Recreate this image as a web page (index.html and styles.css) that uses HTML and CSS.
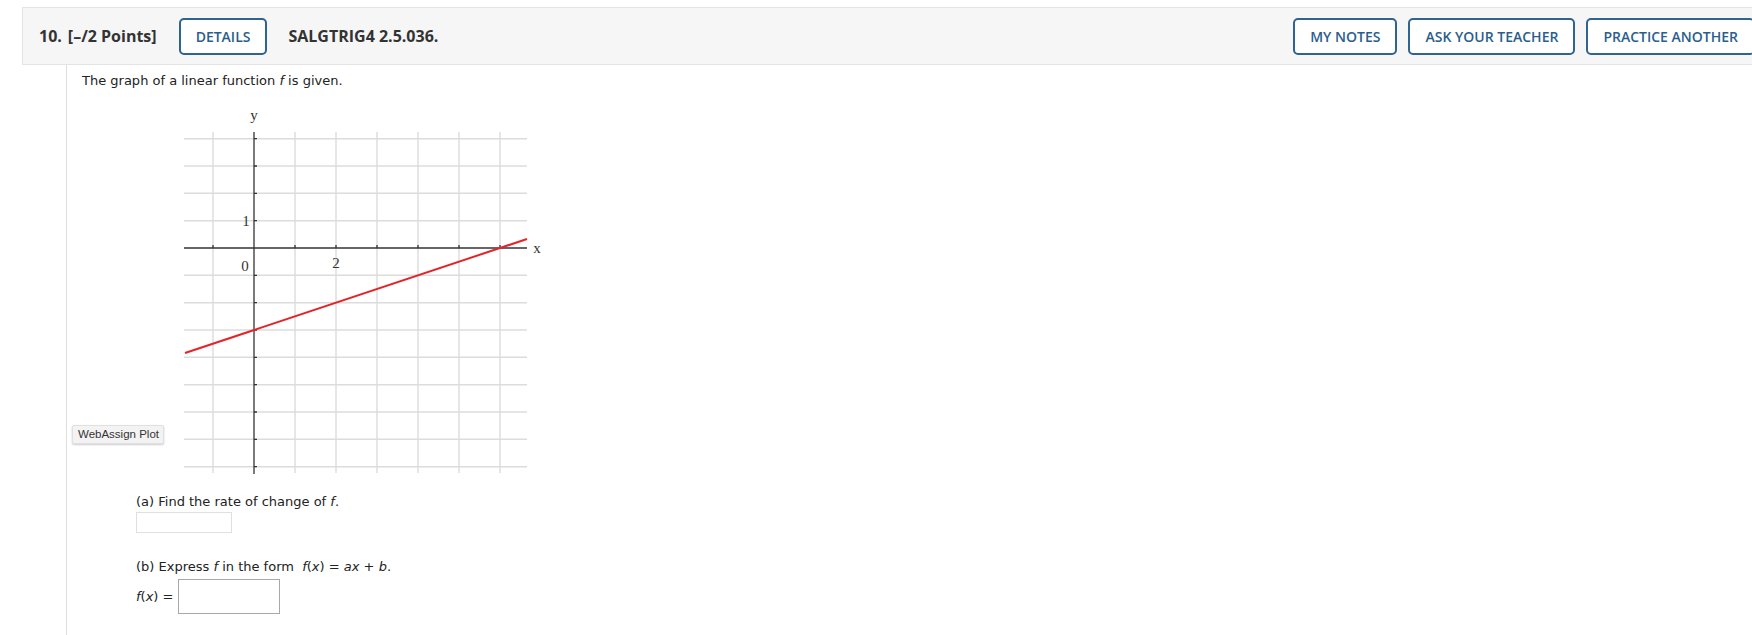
FILE: index.html
```html
<!DOCTYPE html>
<html lang="en">
	<head>
		<meta charset="utf-8">
		<title>SALGTRIG4 2.5.036</title>
		<link rel="stylesheet" href="styles.css">
	</head>
	<body>
		<div class="qhead">
			<span class="qnum">10.</span>
			<span class="qpts">[&ndash;/2 Points]</span>
			<button class="qbtn details">DETAILS</button>
			<span class="qname">SALGTRIG4 2.5.036.</span>
			<div class="qtools">
				<button class="qbtn">MY NOTES</button>
				<button class="qbtn">ASK YOUR TEACHER</button>
				<button class="qbtn">PRACTICE ANOTHER</button>
			</div>
		</div>
		<div class="qbody">
			<p class="prompt">The graph of a linear function <i>f</i> is given.</p>
			<div class="figure">
				<span class="badge">WebAssign Plot</span>
				<svg class="plot" width="370" height="382" viewBox="0 0 370 382">
					<g stroke="#dcdcdc" stroke-width="1.4">
						<!-- horizontal grid -->
						<line x1="5" y1="40.7" x2="348" y2="40.7"/>
						<line x1="5" y1="68" x2="348" y2="68"/>
						<line x1="5" y1="95.3" x2="348" y2="95.3"/>
						<line x1="5" y1="122.7" x2="348" y2="122.7"/>
						<line x1="5" y1="177.3" x2="348" y2="177.3"/>
						<line x1="5" y1="204.7" x2="348" y2="204.7"/>
						<line x1="5" y1="232" x2="348" y2="232"/>
						<line x1="5" y1="259.3" x2="348" y2="259.3"/>
						<line x1="5" y1="286.7" x2="348" y2="286.7"/>
						<line x1="5" y1="314" x2="348" y2="314"/>
						<line x1="5" y1="341.3" x2="348" y2="341.3"/>
						<line x1="5" y1="368.7" x2="348" y2="368.7"/>
						<!-- vertical grid -->
						<line x1="34" y1="34" x2="34" y2="375"/>
						<line x1="116" y1="34" x2="116" y2="375"/>
						<line x1="157" y1="34" x2="157" y2="375"/>
						<line x1="198" y1="34" x2="198" y2="375"/>
						<line x1="239" y1="34" x2="239" y2="375"/>
						<line x1="280" y1="34" x2="280" y2="375"/>
						<line x1="321" y1="34" x2="321" y2="375"/>
					</g>
					<g stroke="#333" stroke-width="1.3">
						<line x1="75" y1="34" x2="75" y2="376"/>
						<line x1="5" y1="150" x2="348" y2="150"/>
						<!-- ticks -->
						<path d="M75 40.7h3M75 68h3M75 95.3h3M75 122.7h3M75 177.3h3M75 204.7h3M75 232h3M75 259.3h3M75 286.7h3M75 314h3M75 341.3h3M75 368.7h3"/>
						<path d="M34 150v-3M116 150v-3M157 150v-3M198 150v-3M239 150v-3M280 150v-3M321 150v-3"/>
					</g>
					<line x1="6" y1="255" x2="348" y2="141" stroke="#e2252b" stroke-width="2"/>
					<g class="lbl">
						<text x="75" y="22" text-anchor="middle">y</text>
						<text x="358" y="155" text-anchor="middle">x</text>
						<text x="67" y="128" text-anchor="middle">1</text>
						<text x="66" y="173" text-anchor="middle">0</text>
						<text x="157" y="170" text-anchor="middle">2</text>
					</g>
				</svg>
			</div>
			<div class="parts">
				<p class="part">(a) Find the rate of change of <i>f</i>.</p>
				<input class="ans small" type="text">
				<p class="part partb">(b) Express <i>f</i> in the form&nbsp; <i>f</i>(<i>x</i>) = <i>ax</i> + <i>b</i>.</p>
				<div class="row">
					<span><i>f</i>(<i>x</i>) =</span>
					<input class="ans big" type="text">
				</div>
			</div>
		</div>
	</body>
</html>
```

FILE: styles.css
```css
html{overflow:hidden;}
body{margin:0;font-family:"DejaVu Sans",Verdana,sans-serif;font-size:13px;color:#222;background:#fff;}

.qhead{
	display:flex;align-items:center;
	margin:7px -30px 0 22px;height:56px;
	padding:0 27px 0 16px;
	background:#f6f6f6;border:1px solid #e4e4e4;border-right:0;
	font-family:"Open Sans",sans-serif;font-weight:700;font-size:16px;color:#333;
}
.qnum{margin-right:6px;}
.qpts{margin-right:22px;}
.qname{margin-left:21px;}
.qtools{margin-left:auto;display:flex;gap:11px;}
.qbtn{
	font-family:"Open Sans",sans-serif;font-weight:600;font-size:14px;color:#2b5e8c;
	background:#fff;border:2px solid #2f6390;border-radius:5px;
	height:37px;padding:0 15px;
}

.qbody{margin-left:66px;border-left:1px solid #dedede;padding:8px 0 40px 15px;min-height:520px;}
.prompt{margin:0;line-height:16px;}
.figure{display:flex;align-items:flex-end;gap:15px;margin:9px 0 0 -10px;}
.badge{
	font-family:"Liberation Sans",Arial,sans-serif;font-size:11.5px;color:#333;
	background:#f3f3f3;border:1px solid #e0e0e0;border-radius:2px;
	box-shadow:0 1px 2px rgba(0,0,0,.2);
	padding:1px 4px 1px 5px;line-height:15px;margin-bottom:36px;
}
.plot{display:block;}
.lbl{font-family:"Liberation Serif","DejaVu Serif",serif;font-size:15px;fill:#333;}

.parts{margin-left:54px;}
.part{margin:14px 0 0;line-height:16px;}
.partb{margin-top:26px;}
.ans{display:block;box-sizing:border-box;margin:2px 0 0;padding:0;background:#fff;}
.small{width:96px;height:21px;border:1px solid #e0e0e0;}
.big{width:102px;height:35px;border:1px solid #a8a8a8;}
.row{display:flex;align-items:center;gap:5px;margin-top:4px;}
.row .ans{margin:0;}
```
